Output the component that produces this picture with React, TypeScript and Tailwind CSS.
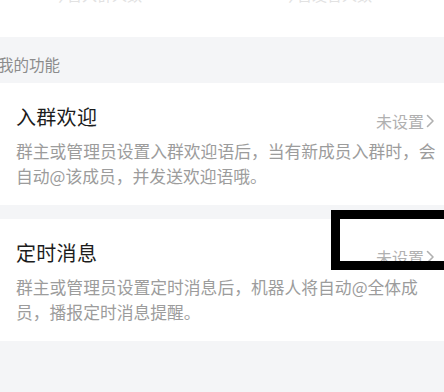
import React from 'react';

const FONT = { fontFamily: '"Noto Sans CJK SC", "Noto Sans", sans-serif' };

function Chevron() {
  return (
    <svg width="10" height="14" viewBox="0 0 10 14" fill="none" className="ml-[1px]">
      <path d="M2.5 1.5 L8 7 L2.5 12.5" stroke="#b0b0b0" strokeWidth="1.6" strokeLinecap="round" strokeLinejoin="round" />
    </svg>
  );
}

interface FeatureProps {
  title: string;
  lines: string[];
}

function FeatureCard({ title, lines }: FeatureProps) {
  return (
    <div className="bg-white h-[122px] pl-4 pr-2 pt-[20px]">
      <div className="flex items-center justify-between h-[28px]">
        <span className="text-[20px] leading-[28px] text-[#1c1c1c] tracking-[0.3px]">{title}</span>
        <span className="flex items-center mt-[7px] pr-[1px] text-[16px] text-[#b0b0b0]">
          未设置
          <Chevron />
        </span>
      </div>
      <div className="mt-[8px] text-[16.8px] leading-[25px] text-[#9c9c9c]">
        {lines.map((l) => (
          <div key={l} className="whitespace-nowrap">{l}</div>
        ))}
      </div>
    </div>
  );
}

export default function App() {
  return (
    <div className="relative w-[444px] h-[392px] overflow-hidden bg-[#f4f5f7]" style={FONT}>
      <div className="h-[37px] bg-white overflow-hidden flex text-[15px] leading-[20px] text-[#e2e2e2]">
        <span className="ml-[52px] -mt-[15px]">今日入群人数</span>
        <span className="ml-[140px] -mt-[15px]">今日发言人数</span>
      </div>
      <div className="h-[46px] flex items-center pt-[10px] -ml-[2px] text-[15.5px] text-[#8c8c8c]">我的功能</div>
      <FeatureCard
        title="入群欢迎"
        lines={['群主或管理员设置入群欢迎语后，当有新成员入群时，会', '自动@该成员，并发送欢迎语哦。']}
      />
      <div className="h-[14px]" />
      <FeatureCard
        title="定时消息"
        lines={['群主或管理员设置定时消息后，机器人将自动@全体成', '员，播报定时消息提醒。']}
      />
      <div className="absolute left-[331px] top-[210px] w-[130px] h-[60px] border-[9px] border-black" />
    </div>
  );
}
